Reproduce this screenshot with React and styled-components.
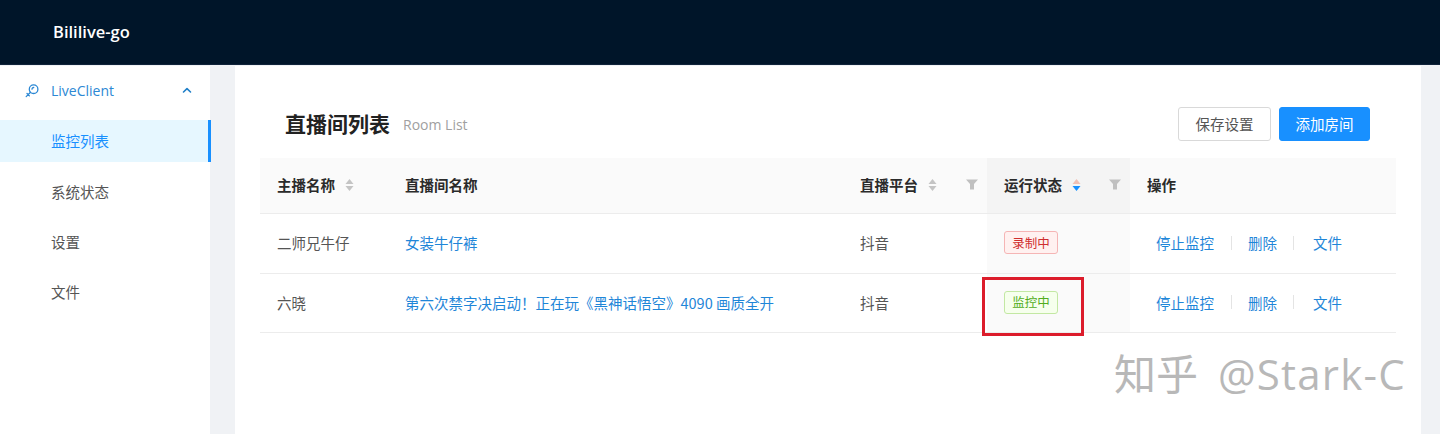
import React from "react"
import styled, { createGlobalStyle } from "styled-components"

const GlobalStyle = createGlobalStyle`
  html, body {
    margin: 0;
    padding: 0;
    height: 434px;
    overflow: hidden;
    background: #f0f2f5;
    font-family: "Noto Sans CJK SC", "Noto Sans", sans-serif;
  }
`

const Page = styled.div`
  position: relative;
  width: 1440px;
  height: 434px;
  overflow: hidden;
  display: flex;
  flex-direction: column;
`

const Header = styled.header`
  height: 65px;
  flex: none;
  box-sizing: border-box;
  padding: 0 0 1px 53px;
  display: flex;
  align-items: center;
  background: #001529;
  border-bottom: 1px solid #10233a;
  color: #fff;
  font-family: "Open Sans", "Noto Sans", sans-serif;
  font-size: 16.5px;
  font-weight: 600;
`

const Body = styled.div`
  flex: 1;
  display: flex;
  min-height: 0;
  margin-top: 1px;
`

const Sider = styled.nav`
  width: 210px;
  flex: none;
  background: #fff;
  padding-top: 4px;
`

const MenuTitle = styled.div`
  height: 42px;
  display: flex;
  align-items: center;
  padding: 0 18px 1px 25px;
  box-sizing: border-box;
  gap: 12px;
  color: #2c88d4;
  font-family: "Open Sans", "Noto Sans", sans-serif;
  font-size: 14px;
  margin-bottom: 8px;

  span {
    flex: 1;
  }
`

const MenuItem = styled.div`
  height: 42px;
  box-sizing: border-box;
  display: flex;
  align-items: center;
  padding: 0 0 ${p => (p.$active ? "2px" : "0")} 51px;
  margin-bottom: 8px;
  font-size: 14.5px;
  color: ${p => (p.$active ? "#1890ff" : "#555")};
  background: ${p => (p.$active ? "#e6f7ff" : "transparent")};
  border-right: ${p => (p.$active ? "3px solid #1890ff" : "none")};
  margin-right: ${p => (p.$active ? "-1px" : "0")};
`

const Content = styled.main`
  flex: 1;
  padding: 0 20px 0 25px;
  display: flex;
`

const Card = styled.section`
  flex: 1;
  background: #fff;
  padding: 41px 25px 0;
`

const CardHead = styled.div`
  display: flex;
  align-items: center;
  height: 34px;
  padding: 0 26px 0 25px;
  margin-bottom: 17px;
`

const Title = styled.h2`
  margin: -2px 0 0;
  font-size: 21px;
  font-weight: 600;
  color: #222;
  line-height: 34px;
`

const SubTitle = styled.span`
  margin-left: 13px;
  font-family: "Open Sans", "Noto Sans", sans-serif;
  font-size: 14px;
  color: #a0a0a0;
  flex: 1;
`

const Button = styled.button`
  height: 34px;
  width: ${p => (p.$primary ? "91px" : "93px")};
  margin-left: ${p => (p.$primary ? "8px" : "0")};
  box-sizing: border-box;
  border-radius: 3px;
  border: 1px solid ${p => (p.$primary ? "#1890ff" : "#d9d9d9")};
  background: ${p => (p.$primary ? "#1890ff" : "#fff")};
  color: ${p => (p.$primary ? "#fff" : "#555")};
  font-family: inherit;
  font-size: 14.5px;
  padding: 0 0 2px;
`

const Row = styled.div`
  display: grid;
  grid-template-columns: 128px 455px 144px 143px 266px;
  height: ${p => p.$height}px;
  border-bottom: 1px solid #ececec;
  box-sizing: border-box;
  background: ${p => (p.$head ? "#fafafa" : "#fff")};
`

const Cell = styled.div`
  display: flex;
  align-items: center;
  padding: 0 0 2px 17px;
  font-size: 14.5px;
  font-weight: ${p => (p.$head ? 600 : 400)};
  color: ${p => (p.$head ? "#2b2b2b" : "#555")};
  background: ${p =>
    p.$sorted ? (p.$head ? "#f4f4f4" : "#fafafa") : "transparent"};
`

const HeadLabel = styled.span`
  margin-right: 10px;
`

const FilterSlot = styled.span`
  margin-left: auto;
  margin-right: 9px;
  display: flex;
`

const RoomLink = styled.span`
  color: #1f86d8;
  white-space: nowrap;
`

const Tag = styled.span`
  box-sizing: border-box;
  height: 23px;
  width: 54px;
  display: flex;
  align-items: center;
  justify-content: center;
  padding-bottom: 1px;
  border-radius: 3px;
  font-size: 12.5px;
  border: 1px solid ${p => (p.$tone === "red" ? "#f5b5b5" : "#c3e8a3")};
  background: ${p => (p.$tone === "red" ? "#fff1f0" : "#f6ffed")};
  color: ${p => (p.$tone === "red" ? "#cf2e2e" : "#52ad1c")};
`

const Actions = styled.div`
  display: flex;
  align-items: center;
  padding-left: 9px;
`

const Divider = styled.span`
  width: 1px;
  height: 14px;
  background: #e4e4e4;
  margin: 0 ${p => p.$gap}px 0 ${p => p.$gapLeft}px;
`

const Annotation = styled.div`
  position: absolute;
  left: 982px;
  top: 277px;
  width: 102px;
  height: 59px;
  box-sizing: border-box;
  border: 3px solid #dc1c2b;
`

const Watermark = styled.div`
  position: absolute;
  left: 1114px;
  top: 344px;
  font-family: "Noto Sans CJK SC", "Noto Sans", sans-serif;
  font-size: 42px;
  line-height: 56px;
  color: #b8b8b8;
  white-space: nowrap;
  text-shadow: 1px 1px 0 rgba(255, 255, 255, 0.8);

  b {
    font-family: "Open Sans", "Noto Sans", sans-serif;
    font-weight: 400;
    margin-left: 20px;
    letter-spacing: 1.2px;
  }
`

const SearchIcon = () => (
  <svg width="14" height="14" viewBox="0 0 14 14" fill="none" stroke="#2c88d4" strokeWidth="1.3" strokeLinecap="round">
    <circle cx="8.6" cy="5.2" r="4.3" />
    <path d="M5.5 8.3 1.2 12.6M2 9.5l2.4 2.4M7 5.2a1.7 1.7 0 0 1 1.7-1.7" />
  </svg>
)

const ChevronUp = () => (
  <svg width="10" height="7" viewBox="0 0 10 7" fill="none" stroke="#1f7fc8" strokeWidth="1.6" strokeLinecap="round" strokeLinejoin="round">
    <path d="M1.5 5 5 1.6 8.5 5" />
  </svg>
)

const Sorter = ({ active }) => (
  <svg width="9" height="14" viewBox="0 0 9 14">
    <path d="M4.5 1 8.5 6h-8z" fill={active ? "#f0c0b4" : "#c4c4c4"} />
    <path d="M4.5 13 .5 8h8z" fill={active ? "#1890ff" : "#c4c4c4"} />
  </svg>
)

const Filter = () => (
  <svg width="12" height="11" viewBox="0 0 12 11">
    <path d="M0 .5h12L8 5v5.5H4V5z" fill="#c0c0c0" />
  </svg>
)

const rooms = [
  { host: "二师兄牛仔", name: "女装牛仔裤", status: "录制中", tone: "red" },
  {
    host: "六晓",
    name: "第六次禁字决启动！正在玩《黑神话悟空》4090 画质全开",
    status: "监控中",
    tone: "green",
  },
]

const App = () => (
  <Page>
    <GlobalStyle />
    <Header>Bililive-go</Header>
    <Body>
      <Sider>
        <MenuTitle>
          <SearchIcon />
          <span>LiveClient</span>
          <ChevronUp />
        </MenuTitle>
        <MenuItem $active>监控列表</MenuItem>
        <MenuItem>系统状态</MenuItem>
        <MenuItem>设置</MenuItem>
        <MenuItem>文件</MenuItem>
      </Sider>
      <Content>
        <Card>
          <CardHead>
            <Title>直播间列表</Title>
            <SubTitle>Room List</SubTitle>
            <Button>保存设置</Button>
            <Button $primary>添加房间</Button>
          </CardHead>
          <Row $head $height={56}>
            <Cell $head>
              <HeadLabel>主播名称</HeadLabel>
              <Sorter />
            </Cell>
            <Cell $head>直播间名称</Cell>
            <Cell $head>
              <HeadLabel>直播平台</HeadLabel>
              <Sorter />
              <FilterSlot>
                <Filter />
              </FilterSlot>
            </Cell>
            <Cell $head $sorted>
              <HeadLabel>运行状态</HeadLabel>
              <Sorter active />
              <FilterSlot>
                <Filter />
              </FilterSlot>
            </Cell>
            <Cell $head>操作</Cell>
          </Row>
          {rooms.map(room => (
            <Row key={room.host} $height={room.tone === "red" ? 60 : 59}>
              <Cell>{room.host}</Cell>
              <Cell>
                <RoomLink>{room.name}</RoomLink>
              </Cell>
              <Cell>抖音</Cell>
              <Cell $sorted>
                <Tag $tone={room.tone}>{room.status}</Tag>
              </Cell>
              <Cell>
                <Actions>
                  <RoomLink>停止监控</RoomLink>
                  <Divider $gapLeft={17} $gap={16} />
                  <RoomLink>删除</RoomLink>
                  <Divider $gapLeft={16} $gap={19} />
                  <RoomLink>文件</RoomLink>
                </Actions>
              </Cell>
            </Row>
          ))}
        </Card>
      </Content>
    </Body>
    <Annotation />
    <Watermark>
      知乎<b>@Stark-C</b>
    </Watermark>
  </Page>
)

export default App
